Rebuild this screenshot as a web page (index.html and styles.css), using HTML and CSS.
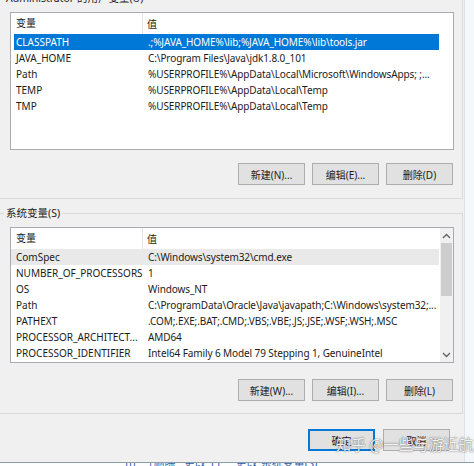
FILE: index.html
```html
<!DOCTYPE html>
<html lang="zh-CN">
<head>
<meta charset="utf-8">
<title>环境变量</title>
<link rel="stylesheet" href="styles.css">
</head>
<body>
<div class="screen">
  <div class="dialog">
    <fieldset class="group group-user">
      <legend>Administrator 的用户变量(U)</legend>
      <div class="list">
        <div class="lv-body">
          <div class="lv-head"><span class="h1">变量</span><span class="h2">值</span></div>
          <div class="row selected"><span class="c1">CLASSPATH</span><span class="c2">.;%JAVA_HOME%\lib;%JAVA_HOME%\lib\tools.jar</span></div>
          <div class="row"><span class="c1">JAVA_HOME</span><span class="c2">C:\Program Files\Java\jdk1.8.0_101</span></div>
          <div class="row"><span class="c1">Path</span><span class="c2">%USERPROFILE%\AppData\Local\Microsoft\WindowsApps; ;...</span></div>
          <div class="row"><span class="c1">TEMP</span><span class="c2">%USERPROFILE%\AppData\Local\Temp</span></div>
          <div class="row"><span class="c1">TMP</span><span class="c2">%USERPROFILE%\AppData\Local\Temp</span></div>
        </div>
      </div>
      <div class="btns">
        <button class="btn">新建(N)...</button>
        <button class="btn">编辑(E)...</button>
        <button class="btn">删除(D)</button>
      </div>
    </fieldset>
    <fieldset class="group group-sys">
      <legend>系统变量(S)</legend>
      <div class="list list-sys">
        <div class="lv-body">
          <div class="lv-head"><span class="h1">变量</span><span class="h2">值</span></div>
          <div class="row hover"><span class="c1">ComSpec</span><span class="c2">C:\Windows\system32\cmd.exe</span></div>
          <div class="row"><span class="c1">NUMBER_OF_PROCESSORS</span><span class="c2">1</span></div>
          <div class="row"><span class="c1">OS</span><span class="c2">Windows_NT</span></div>
          <div class="row"><span class="c1">Path</span><span class="c2">C:\ProgramData\Oracle\Java\javapath;C:\Windows\system32;...</span></div>
          <div class="row"><span class="c1">PATHEXT</span><span class="c2">.COM;.EXE;.BAT;.CMD;.VBS;.VBE;.JS;.JSE;.WSF;.WSH;.MSC</span></div>
          <div class="row"><span class="c1">PROCESSOR_ARCHITECT...</span><span class="c2">AMD64</span></div>
          <div class="row"><span class="c1">PROCESSOR_IDENTIFIER</span><span class="c2">Intel64 Family 6 Model 79 Stepping 1, GenuineIntel</span></div>
        </div>
        <div class="scrollbar">
          <div class="sb-arrow"><svg width="9" height="6" viewBox="0 0 9 6"><path d="M1 5 L4.5 1.5 L8 5" fill="none" stroke="#606060" stroke-width="1.3"/></svg></div>
          <div class="sb-thumb"></div>
          <div class="sb-track"></div>
          <div class="sb-arrow"><svg width="9" height="6" viewBox="0 0 9 6"><path d="M1 1 L4.5 4.5 L8 1" fill="none" stroke="#606060" stroke-width="1.3"/></svg></div>
        </div>
      </div>
      <div class="btns btns-sys">
        <button class="btn">新建(W)...</button>
        <button class="btn">编辑(I)...</button>
        <button class="btn">删除(L)</button>
      </div>
    </fieldset>
    <div class="footer">
      <button class="btn btn-default">确定</button>
      <button class="btn">取消</button>
    </div>
  </div>
  <div class="side"></div>
</div>
<div class="under"><span class="under-text">出    |删除   更改 11     更改 系统变量(S)</span></div>
<div class="watermark">知乎 @一些与游近航</div>
</body>
</html>
```

FILE: styles.css
```css
html, body {
  margin: 0;
  padding: 0;
}
body {
  width: 474px;
  height: 466px;
  overflow: hidden;
  background: #f0f0f0;
  font-family: "Noto Sans", "Noto Sans CJK SC", sans-serif;
  font-size: 10px;
  color: #1b1b1b;
  position: relative;
}
.screen {
  display: flex;
  height: 462px;
}
.dialog {
  width: 464px;
  flex: none;
  background: #f0f0f0;
  display: flex;
  flex-direction: column;
}
.side {
  flex: 1;
  background: #f4f8fb;
  border-left: 1px solid #dde2e6;
}
.group {
  margin: 0 0 0 -1px;
  width: 464px;
  box-sizing: border-box;
  border: 1px solid #d9d9d9;
  padding: 0 8px 0 10px;
  min-width: 0;
}
.group legend {
  padding: 0 2px;
  margin-left: -6px;
  line-height: 16px;
  height: 16px;
  font-size: 10.5px;
}
.group-user {
  margin-top: -10px;
  padding-top: 6px;
  padding-bottom: 13px;
}
.group-sys {
  margin-top: 6px;
  padding-top: 6px;
  padding-bottom: 12px;
}
.list {
  height: 138px;
  box-sizing: border-box;
  border: 1px solid #a9abb0;
  background: #fff;
  display: flex;
  overflow: hidden;
}
.list-sys {
  height: 136px;
}
.lv-body {
  flex: 1;
  min-width: 0;
}
.lv-head {
  height: 21px;
  display: flex;
  align-items: center;
}
.h1 {
  width: 126px;
  padding-left: 5px;
  height: 21px;
  line-height: 21px;
  border-right: 1px solid #e5e5e5;
}
.h2 {
  padding-left: 4px;
}
.row {
  height: 16px;
  line-height: 16px;
  margin-left: 3px;
  width: 425px;
  display: flex;
  white-space: nowrap;
  overflow: hidden;
}
.c1 {
  width: 132px;
  padding-left: 2px;
  flex: none;
  overflow: hidden;
}
.c2 {
  flex: 1;
  overflow: hidden;
  letter-spacing: -0.1px;
}
.row.selected {
  background: #0078d7;
  color: #fff;
}
.row.hover {
  background: #e9e9e9;
  margin-left: 0;
  width: 428px;
  padding-left: 3px;
  box-sizing: border-box;
}
.scrollbar {
  width: 13px;
  flex: none;
  background: #f0f0f0;
  display: flex;
  flex-direction: column;
}
.sb-arrow {
  height: 15px;
  display: flex;
  align-items: center;
  justify-content: center;
}
.sb-thumb {
  height: 53px;
  margin: 0 1px;
  background: #cdcdcd;
}
.sb-track {
  flex: 1;
}
.btns {
  display: flex;
  justify-content: flex-end;
  gap: 7px;
  margin-top: 13px;
  margin-right: 1px;
}
.btns-sys {
  margin-top: 16px;
}
.btn {
  width: 67px;
  height: 22px;
  box-sizing: border-box;
  border: 1px solid #adadad;
  background: #e1e1e1;
  font-family: "Noto Sans", "Noto Sans CJK SC", sans-serif;
  font-size: 10px;
  color: #1b1b1b;
  padding: 0;
  margin: 0;
}
.footer {
  display: flex;
  justify-content: flex-end;
  gap: 8px;
  padding: 15px 14px 0 0;
}
.btn-default {
  border: 2px solid #0078d7;
}
.under {
  height: 3px;
  border-top: 1px solid #8c9cab;
  background: #fff;
  overflow: hidden;
  padding-left: 125px;
}
.under-text {
  display: block;
  font-size: 11px;
  line-height: 11px;
  margin-top: -6px;
  color: #2a5db0;
  white-space: pre;
}
.watermark {
  position: absolute;
  left: 336px;
  top: 434px;
  font-family: "Noto Sans CJK SC", sans-serif;
  font-size: 15px;
  line-height: 20px;
  color: rgba(255, 255, 255, 0.92);
  text-shadow: 0 0 1px rgba(60, 60, 60, 0.7), 0 0 2px rgba(60, 60, 60, 0.5);
  white-space: nowrap;
}
```
